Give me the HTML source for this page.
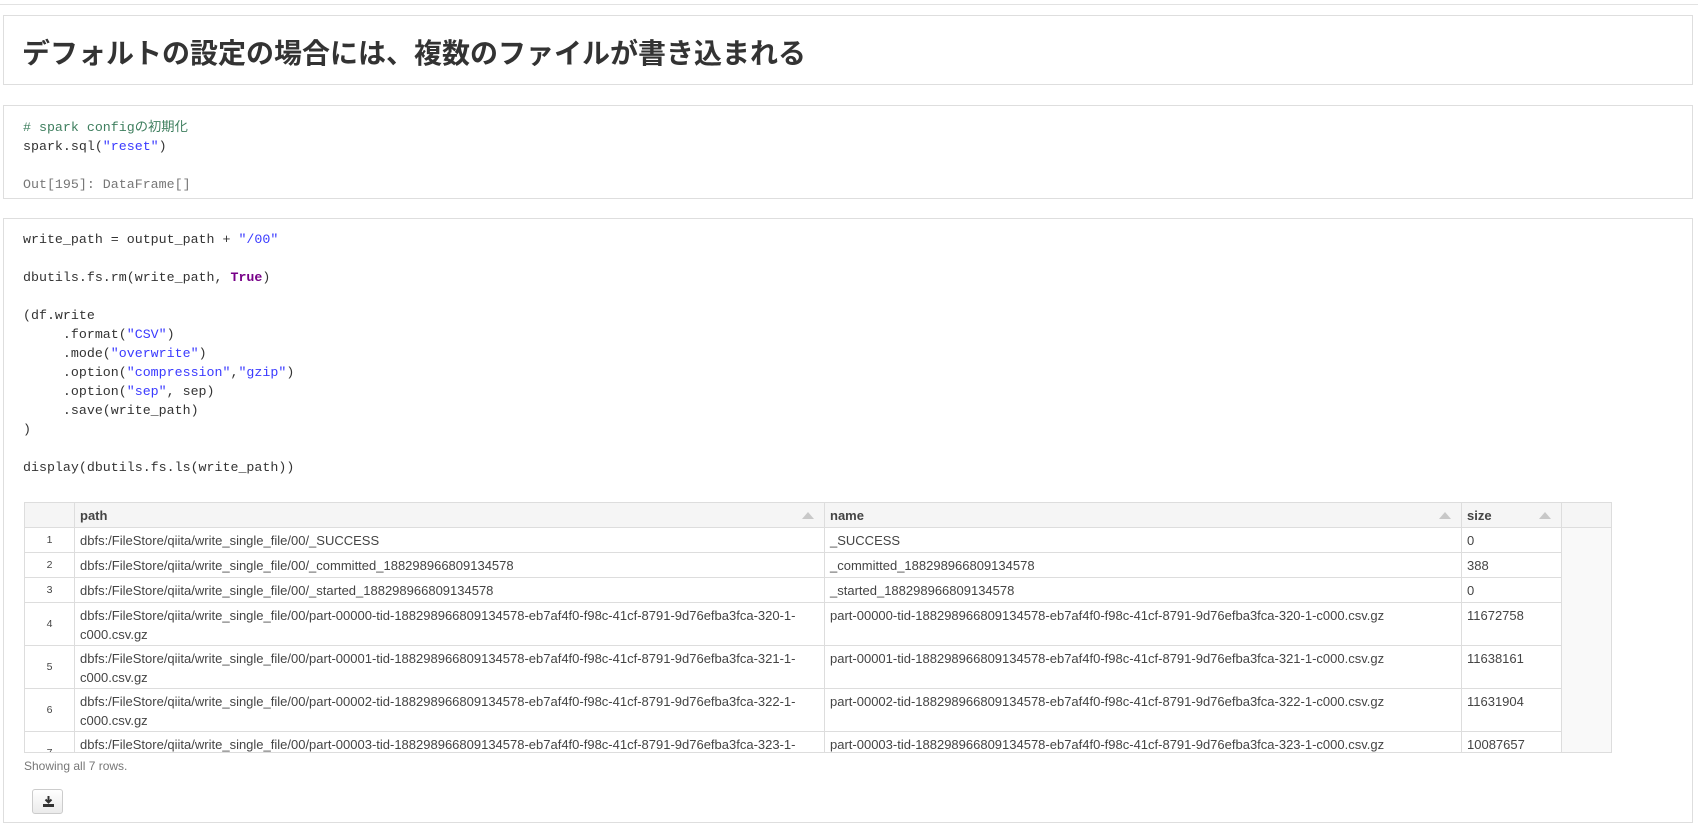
<!DOCTYPE html>
<html><head><meta charset="utf-8">
<style>
*{box-sizing:border-box;margin:0;padding:0}
body{width:1698px;height:831px;background:#fff;position:relative;overflow:hidden;font-family:"Liberation Sans","Noto Sans CJK JP",sans-serif;color:#333}
.topline{position:absolute;left:0;right:0;top:4px;height:1px;background:#e2e2e2}
.cell{position:absolute;left:3px;width:1690px;border:1px solid #dedede;background:#fff}
h1{position:absolute;left:22px;top:32px;font-size:28px;font-weight:bold;color:#333;font-family:"Liberation Sans","Noto Sans CJK JP",sans-serif;white-space:nowrap}
pre{position:absolute;left:23px;font-family:"Liberation Mono","Noto Sans CJK JP",monospace;font-size:13.3px;line-height:19px;color:#333}
.c{color:#3f7f5f}.s{color:#3a3aff}.k{color:#770088;font-weight:bold}.o{color:#777}
.tbl{position:absolute;left:24px;top:502px;width:1588px;height:251px;overflow:hidden;border:1px solid #ddd;border-top:none;border-left:none;font-size:13px}
table{border-collapse:collapse;table-layout:fixed;width:1588px}
td,th{border:1px solid #ddd;padding:0 5px;vertical-align:top;line-height:19px;text-align:left;font-weight:normal;color:#444}
th{background:#f5f5f5;height:25px;padding-top:3px;font-weight:bold;color:#444;position:relative}
th .arr{position:absolute;right:10px;top:9px;width:0;height:0;border-left:6px solid transparent;border-right:6px solid transparent;border-bottom:7px solid #c8c8c8}
td{height:25px;padding-top:3px}
tr.t td{height:43px}
td.i{font-size:10.5px;text-align:center;vertical-align:middle;padding:0;color:#444}
td.x{background:#f9f9f9;border-top:none;border-bottom:none}
.show{position:absolute;left:24px;top:759px;font-size:12px;color:#777}
.btn{position:absolute;left:32px;top:789px;width:31px;height:25px;border:1px solid #ccc;border-radius:3px;background:linear-gradient(#fff,#ebebeb)}
</style></head><body>
<div class="topline"></div>
<div class="cell" style="top:15px;height:70px"></div>
<h1>デフォルトの設定の場合には、複数のファイルが書き込まれる</h1>
<div class="cell" style="top:105px;height:94px"></div>
<pre style="top:118px"><span class="c"># spark configの初期化</span>
spark.sql(<span class="s">"reset"</span>)

<span class="o">Out[195]: DataFrame[]</span></pre>
<div class="cell" style="top:218px;height:605px"></div>
<pre style="top:230px">write_path = output_path + <span class="s">"/00"</span>

dbutils.fs.rm(write_path, <span class="k">True</span>)

(df.write
     .format(<span class="s">"CSV"</span>)
     .mode(<span class="s">"overwrite"</span>)
     .option(<span class="s">"compression"</span>,<span class="s">"gzip"</span>)
     .option(<span class="s">"sep"</span>, sep)
     .save(write_path)
)

display(dbutils.fs.ls(write_path))</pre>
<div class="tbl"><table>
<colgroup><col style="width:50px"><col style="width:750px"><col style="width:637px"><col style="width:100px"><col style="width:51px"></colgroup>
<tr><th></th><th>path<span class="arr"></span></th><th>name<span class="arr"></span></th><th>size<span class="arr"></span></th><th></th></tr>
<tr><td class="i">1</td><td>dbfs:/FileStore/qiita/write_single_file/00/_SUCCESS</td><td>_SUCCESS</td><td>0</td><td class="x"></td></tr>
<tr><td class="i">2</td><td>dbfs:/FileStore/qiita/write_single_file/00/_committed_188298966809134578</td><td>_committed_188298966809134578</td><td>388</td><td class="x"></td></tr>
<tr><td class="i">3</td><td>dbfs:/FileStore/qiita/write_single_file/00/_started_188298966809134578</td><td>_started_188298966809134578</td><td>0</td><td class="x"></td></tr>
<tr class="t"><td class="i">4</td><td>dbfs:/FileStore/qiita/write_single_file/00/part-00000-tid-188298966809134578-eb7af4f0-f98c-41cf-8791-9d76efba3fca-320-1-<br>c000.csv.gz</td><td>part-00000-tid-188298966809134578-eb7af4f0-f98c-41cf-8791-9d76efba3fca-320-1-c000.csv.gz</td><td>11672758</td><td class="x"></td></tr>
<tr class="t"><td class="i">5</td><td>dbfs:/FileStore/qiita/write_single_file/00/part-00001-tid-188298966809134578-eb7af4f0-f98c-41cf-8791-9d76efba3fca-321-1-<br>c000.csv.gz</td><td>part-00001-tid-188298966809134578-eb7af4f0-f98c-41cf-8791-9d76efba3fca-321-1-c000.csv.gz</td><td>11638161</td><td class="x"></td></tr>
<tr class="t"><td class="i">6</td><td>dbfs:/FileStore/qiita/write_single_file/00/part-00002-tid-188298966809134578-eb7af4f0-f98c-41cf-8791-9d76efba3fca-322-1-<br>c000.csv.gz</td><td>part-00002-tid-188298966809134578-eb7af4f0-f98c-41cf-8791-9d76efba3fca-322-1-c000.csv.gz</td><td>11631904</td><td class="x"></td></tr>
<tr class="t"><td class="i">7</td><td>dbfs:/FileStore/qiita/write_single_file/00/part-00003-tid-188298966809134578-eb7af4f0-f98c-41cf-8791-9d76efba3fca-323-1-<br>c000.csv.gz</td><td>part-00003-tid-188298966809134578-eb7af4f0-f98c-41cf-8791-9d76efba3fca-323-1-c000.csv.gz</td><td>10087657</td><td class="x"></td></tr>
</table></div>
<div class="show">Showing all 7 rows.</div>
<div class="btn"><svg width="31" height="25" viewBox="0 0 31 25"><path d="M15.5 6v6M12.5 9.5l3 3 3-3" stroke="#333" stroke-width="2" fill="none"/><rect x="10" y="14" width="11" height="3" fill="#333"/></svg></div>
</body></html>
